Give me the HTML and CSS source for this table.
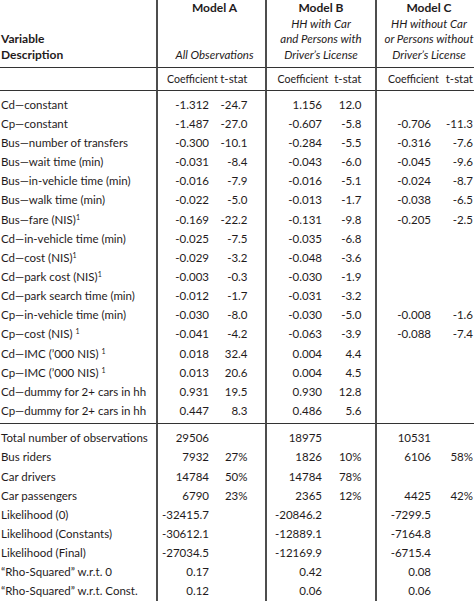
FILE: index.html
```html
<!DOCTYPE html>
<html lang="en">
<head>
<meta charset="utf-8">
<title>Model estimation results</title>
<link rel="stylesheet" href="styles.css">
</head>
<body>
<div class="page">
  <div class="tbl">
    <div class="row">
      <div class="hc lab"><div class="ln"></div><div class="ln"></div><div class="ln b">Variable</div><div class="ln b">Description</div></div>
      <div class="hc s mod ma"><div class="ln b">Model A</div><div class="ln"></div><div class="ln"></div><div class="ln i">All Observations</div></div>
      <div class="hc s mod mb"><div class="ln b">Model B</div><div class="ln i">HH with Car</div><div class="ln i">and Persons with</div><div class="ln i">Driver’s License</div></div>
      <div class="hc s mod mc"><div class="ln b">Model C</div><div class="ln i">HH without Car</div><div class="ln i">or Persons without</div><div class="ln i">Driver’s License</div></div>
    </div>
    <div class="row sub">
      <div class="c"></div>
      <div class="c s ch pa">Coefficient</div><div class="c th ta">t-stat</div>
      <div class="c s ch pb">Coefficient</div><div class="c th tb">t-stat</div>
      <div class="c s ch pc">Coefficient</div><div class="c th tc">t-stat</div>
    </div>
    <div class="row gap g1">
      <div class="c"></div><div class="c s"></div><div class="c"></div><div class="c s"></div><div class="c"></div><div class="c s"></div><div class="c"></div>
    </div>

    <div class="row d"><div class="c l">Cd—constant</div><div class="c s n">-1.312</div><div class="c n ta">-24.7</div><div class="c s n">1.156</div><div class="c n tb">12.0</div><div class="c s n"></div><div class="c n tc"></div></div>
    <div class="row d"><div class="c l">Cp—constant</div><div class="c s n">-1.487</div><div class="c n ta">-27.0</div><div class="c s n">-0.607</div><div class="c n tb">-5.8</div><div class="c s n">-0.706</div><div class="c n tc">-11.3</div></div>
    <div class="row d"><div class="c l">Bus—number of transfers</div><div class="c s n">-0.300</div><div class="c n ta">-10.1</div><div class="c s n">-0.284</div><div class="c n tb">-5.5</div><div class="c s n">-0.316</div><div class="c n tc">-7.6</div></div>
    <div class="row d"><div class="c l">Bus—wait time (min)</div><div class="c s n">-0.031</div><div class="c n ta">-8.4</div><div class="c s n">-0.043</div><div class="c n tb">-6.0</div><div class="c s n">-0.045</div><div class="c n tc">-9.6</div></div>
    <div class="row d"><div class="c l">Bus—in-vehicle time (min)</div><div class="c s n">-0.016</div><div class="c n ta">-7.9</div><div class="c s n">-0.016</div><div class="c n tb">-5.1</div><div class="c s n">-0.024</div><div class="c n tc">-8.7</div></div>
    <div class="row d"><div class="c l">Bus—walk time (min)</div><div class="c s n">-0.022</div><div class="c n ta">-5.0</div><div class="c s n">-0.013</div><div class="c n tb">-1.7</div><div class="c s n">-0.038</div><div class="c n tc">-6.5</div></div>
    <div class="row d"><div class="c l">Bus—fare (NIS)<sup class="fn">1</sup></div><div class="c s n">-0.169</div><div class="c n ta">-22.2</div><div class="c s n">-0.131</div><div class="c n tb">-9.8</div><div class="c s n">-0.205</div><div class="c n tc">-2.5</div></div>
    <div class="row d"><div class="c l">Cd—in-vehicle time (min)</div><div class="c s n">-0.025</div><div class="c n ta">-7.5</div><div class="c s n">-0.035</div><div class="c n tb">-6.8</div><div class="c s n"></div><div class="c n tc"></div></div>
    <div class="row d"><div class="c l">Cd—cost (NIS)<sup class="fn">1</sup></div><div class="c s n">-0.029</div><div class="c n ta">-3.2</div><div class="c s n">-0.048</div><div class="c n tb">-3.6</div><div class="c s n"></div><div class="c n tc"></div></div>
    <div class="row d"><div class="c l">Cd—park cost (NIS)<sup class="fn">1</sup></div><div class="c s n">-0.003</div><div class="c n ta">-0.3</div><div class="c s n">-0.030</div><div class="c n tb">-1.9</div><div class="c s n"></div><div class="c n tc"></div></div>
    <div class="row d"><div class="c l">Cd—park search time (min)</div><div class="c s n">-0.012</div><div class="c n ta">-1.7</div><div class="c s n">-0.031</div><div class="c n tb">-3.2</div><div class="c s n"></div><div class="c n tc"></div></div>
    <div class="row d"><div class="c l">Cp—in-vehicle time (min)</div><div class="c s n">-0.030</div><div class="c n ta">-8.0</div><div class="c s n">-0.030</div><div class="c n tb">-5.0</div><div class="c s n">-0.008</div><div class="c n tc">-1.6</div></div>
    <div class="row d"><div class="c l">Cp—cost (NIS) <sup class="fn">1</sup></div><div class="c s n">-0.041</div><div class="c n ta">-4.2</div><div class="c s n">-0.063</div><div class="c n tb">-3.9</div><div class="c s n">-0.088</div><div class="c n tc">-7.4</div></div>
    <div class="row d"><div class="c l">Cd—IMC (’000 NIS) <sup class="fn">1</sup></div><div class="c s n">0.018</div><div class="c n ta">32.4</div><div class="c s n">0.004</div><div class="c n tb">4.4</div><div class="c s n"></div><div class="c n tc"></div></div>
    <div class="row d"><div class="c l">Cp—IMC (’000 NIS) <sup class="fn">1</sup></div><div class="c s n">0.013</div><div class="c n ta">20.6</div><div class="c s n">0.004</div><div class="c n tb">4.5</div><div class="c s n"></div><div class="c n tc"></div></div>
    <div class="row d"><div class="c l">Cd—dummy for 2+ cars in hh</div><div class="c s n">0.931</div><div class="c n ta">19.5</div><div class="c s n">0.930</div><div class="c n tb">12.8</div><div class="c s n"></div><div class="c n tc"></div></div>
    <div class="row d"><div class="c l">Cp—dummy for 2+ cars in hh</div><div class="c s n">0.447</div><div class="c n ta">8.3</div><div class="c s n">0.486</div><div class="c n tb">5.6</div><div class="c s n"></div><div class="c n tc"></div></div>

    <div class="row gap g2">
      <div class="c"></div><div class="c s"></div><div class="c"></div><div class="c s"></div><div class="c"></div><div class="c s"></div><div class="c"></div>
    </div>
    <div class="row gap g3">
      <div class="c"></div><div class="c s"></div><div class="c"></div><div class="c s"></div><div class="c"></div><div class="c s"></div><div class="c"></div>
    </div>

    <div class="row d"><div class="c l">Total number of observations</div><div class="c s n">29506</div><div class="c n ta"></div><div class="c s n">18975</div><div class="c n tb"></div><div class="c s n">10531</div><div class="c n tc"></div></div>
    <div class="row d"><div class="c l">Bus riders</div><div class="c s n">7932</div><div class="c n ta">27%</div><div class="c s n">1826</div><div class="c n tb">10%</div><div class="c s n">6106</div><div class="c n tc">58%</div></div>
    <div class="row d"><div class="c l">Car drivers</div><div class="c s n">14784</div><div class="c n ta">50%</div><div class="c s n">14784</div><div class="c n tb">78%</div><div class="c s n"></div><div class="c n tc"></div></div>
    <div class="row d"><div class="c l">Car passengers</div><div class="c s n">6790</div><div class="c n ta">23%</div><div class="c s n">2365</div><div class="c n tb">12%</div><div class="c s n">4425</div><div class="c n tc">42%</div></div>
    <div class="row d"><div class="c l">Likelihood (0)</div><div class="c s n">-32415.7</div><div class="c n ta"></div><div class="c s n">-20846.2</div><div class="c n tb"></div><div class="c s n">-7299.5</div><div class="c n tc"></div></div>
    <div class="row d"><div class="c l">Likelihood (Constants)</div><div class="c s n">-30612.1</div><div class="c n ta"></div><div class="c s n">-12889.1</div><div class="c n tb"></div><div class="c s n">-7164.8</div><div class="c n tc"></div></div>
    <div class="row d"><div class="c l">Likelihood (Final)</div><div class="c s n">-27034.5</div><div class="c n ta"></div><div class="c s n">-12169.9</div><div class="c n tb"></div><div class="c s n">-6715.4</div><div class="c n tc"></div></div>
    <div class="row d"><div class="c l">“Rho-Squared” w.r.t. 0</div><div class="c s n">0.17</div><div class="c n ta"></div><div class="c s n">0.42</div><div class="c n tb"></div><div class="c s n">0.08</div><div class="c n tc"></div></div>
    <div class="row d"><div class="c l">“Rho-Squared” w.r.t. Const.</div><div class="c s n">0.12</div><div class="c n ta"></div><div class="c s n">0.06</div><div class="c n tb"></div><div class="c s n">0.06</div><div class="c n tc"></div></div>
  </div>
</div>
</body>
</html>
```

FILE: styles.css
```css
html, body {
  margin: 0;
  padding: 0;
  background: #ffffff;
  overflow: hidden;
}

.page {
  width: 474px;
  height: 603px;
  overflow: hidden;
  font-family: "Lato", "Open Sans", sans-serif;
  font-size: 11.5px;
  color: #1f1b1c;
}

.tbl {
  display: grid;
  grid-template-columns: 156px 55px 54px 59px 51px 58px 57px;
  width: 490px;
}

.row {
  display: contents;
}

.hc, .c {
  box-sizing: border-box;
  white-space: nowrap;
}

/* vertical rules between the label column and each model */
.s {
  border-left: 2px solid #4d4d4d;
}

/* header block */
.hc {
  height: 68px;
  padding-bottom: 5px;
  border-bottom: 1px solid #333333;
}
.hc.mod {
  grid-column: span 2;
  text-align: center;
}
.ma { padding-left: 6px; }
.mc { padding-right: 9px; }
.lab { padding-left: 1px; }

.ln {
  height: 15.5px;
  line-height: 15.5px;
}
.ln.b {
  font-weight: 700;
  font-size: 12px;
}
.ln.i {
  font-style: italic;
}

/* coefficient / t-stat sub-header */
.sub .c {
  height: 23px;
  line-height: 22px;
  border-bottom: 1px solid #333333;
}
.ch {
  text-align: left;
  overflow: visible;
  font-size: 10.6px;
}
.pa { padding-left: 9px; }
.pb { padding-left: 10.5px; }
.pc { padding-left: 11px; }
.th { text-align: right; }

/* spacer rows */
.g1 .c { height: 3.7px; }
.g2 .c { height: 3.75px; border-bottom: 1px solid #333333; }
.g3 .c { height: 4.5px; }

/* data rows */
.d .c {
  height: 19.15px;
  line-height: 19.15px;
}
.l { padding-left: 1px; }
.n { text-align: right; padding-right: 2px; }
.ta { padding-right: 17.5px; }
.tb { padding-right: 13.5px; }
.tc { padding-right: 17px; }

.fn {
  font-size: 7px;
  line-height: 0;
  vertical-align: 4px;
}
```
